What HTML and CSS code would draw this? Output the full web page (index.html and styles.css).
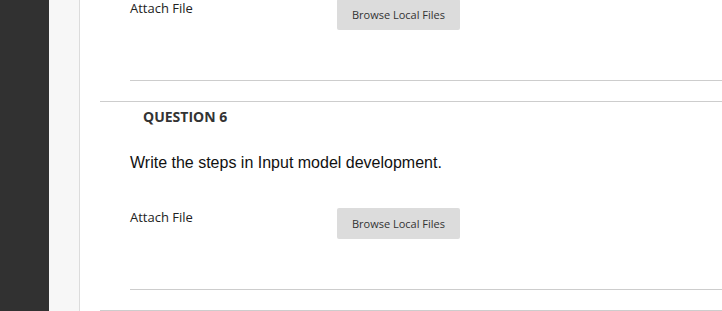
FILE: index.html
```html
<!DOCTYPE html>
<html lang="en">
<head>
    <meta charset="UTF-8">
    <meta name="viewport" content="width=device-width, initial-scale=1.0">
    <title>Test</title>
    <link rel="stylesheet" href="styles.css">
</head>
<body>
<div class="sidebar"></div>
<div class="gutter"></div>
<main class="content">
    <section class="question question-tail">
        <div class="q-body">
            <div class="attach-row">
                <span class="attach-label">Attach File</span>
                <button type="button" class="browse-btn">Browse Local Files</button>
            </div>
        </div>
    </section>

    <section class="question">
        <h3 class="q-title">QUESTION 6</h3>
        <div class="q-body">
            <p class="q-text">Write the steps in Input model development.</p>
            <div class="attach-row">
                <span class="attach-label">Attach File</span>
                <button type="button" class="browse-btn">Browse Local Files</button>
            </div>
        </div>
    </section>

    <section class="question"></section>
</main>
</body>
</html>
```

FILE: styles.css
```css
html, body {
    margin: 0;
    padding: 0;
    height: 100%;
}

body {
    display: flex;
    overflow: hidden;
    background-color: #fff;
    font-family: "Open Sans", Arial, sans-serif;
    color: #222;
}

.sidebar {
    width: 49px;
    flex-shrink: 0;
    background-color: #313131;
}

.gutter {
    width: 30px;
    flex-shrink: 0;
    background-color: #f7f7f7;
    border-right: 1px solid #dcdcdc;
}

.content {
    flex: 1;
    margin-top: -1px;
}

.question {
    margin-left: 20px;
    border-top: 1px solid #cdcdcd;
}

.question-tail {
    border-top: none;
}

.q-body {
    margin-left: 30px;
    padding-bottom: 50px;
    border-bottom: 1px solid #cdcdcd;
    margin-bottom: 20px;
}

.q-title {
    margin: 0;
    padding: 5px 0 0 43px;
    font-size: 14px;
    line-height: 20px;
    font-weight: 700;
    color: #333;
}

.q-text {
    margin: 26px 0 35px;
    font-family: Arial, "Liberation Sans", sans-serif;
    font-size: 16px;
    line-height: 20px;
    color: #111;
}

.attach-row {
    display: flex;
    align-items: flex-start;
}

.attach-label {
    width: 207px;
    font-size: 13px;
    line-height: 18px;
}

.browse-btn {
    height: 31px;
    width: 123px;
    padding: 0;
    border: none;
    border-radius: 2px;
    background-color: #dcdcdc;
    color: #333;
    font-family: "Open Sans", Arial, sans-serif;
    font-size: 11px;
    cursor: pointer;
}
```
